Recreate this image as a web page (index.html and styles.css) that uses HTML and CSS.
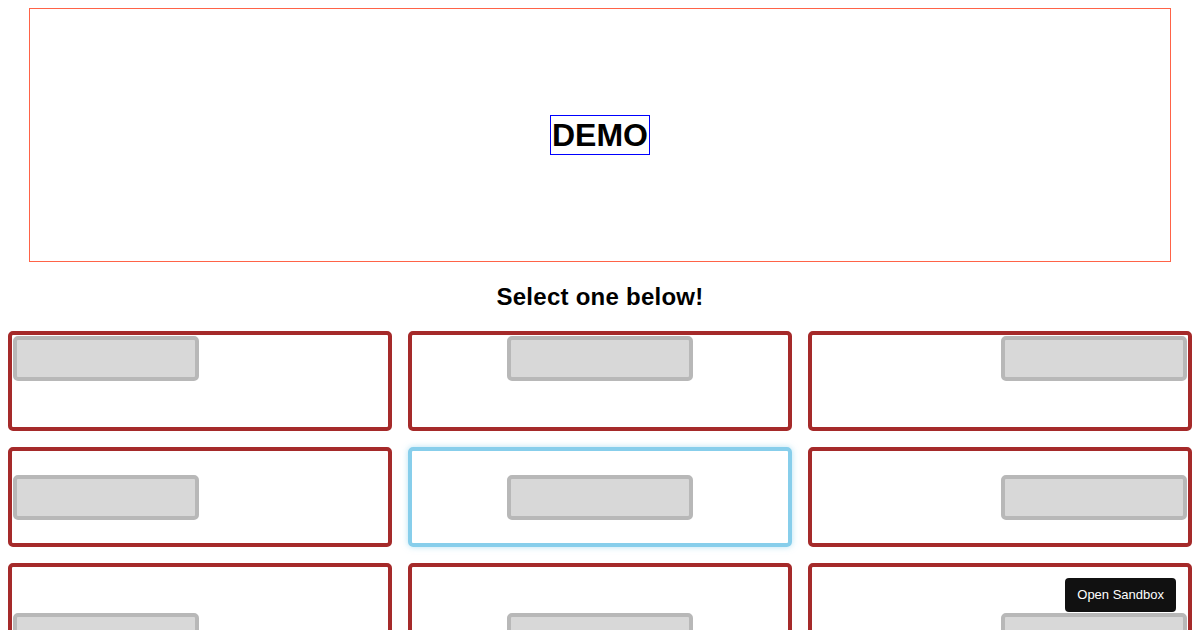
FILE: index.html
```html
<!DOCTYPE html>
<html lang="en">
<head>
    <meta charset="UTF-8">
    <meta name="viewport" content="width=device-width, initial-scale=1.0">
    <title>Align Demo</title>
    <link rel="stylesheet" href="styles.css">
</head>
<body>
    <div class="demo-area">
        <div class="demo-box">DEMO</div>
    </div>
    <h2 class="prompt">Select one below!</h2>
    <div class="option-grid">
        <div class="option align-start justify-start"><div class="chip"></div></div>
        <div class="option align-start justify-center"><div class="chip"></div></div>
        <div class="option align-start justify-end"><div class="chip"></div></div>
        <div class="option align-center justify-start"><div class="chip"></div></div>
        <div class="option align-center justify-center selected"><div class="chip"></div></div>
        <div class="option align-center justify-end"><div class="chip"></div></div>
        <div class="option align-end justify-start"><div class="chip"></div></div>
        <div class="option align-end justify-center"><div class="chip"></div></div>
        <div class="option align-end justify-end"><div class="chip"></div></div>
    </div>
    <a href="#" class="sandbox-button">Open Sandbox</a>
</body>
</html>
```
FILE: styles.css
```css
* {
    box-sizing: border-box;
}
body {
    margin: 0;
    font-family: "Liberation Sans", Arial, sans-serif;
    color: #000;
    background-color: #fff;
}
.demo-area {
    box-sizing: content-box;
    width: 95%;
    height: 252px;
    margin: 8px auto 0;
    border: 1px solid #ff6347;
    display: flex;
    align-items: center;
    justify-content: center;
}
.demo-box {
    border: 1px solid blue;
    font-size: 32px;
    font-weight: bold;
    line-height: 38px;
    padding: 0 1px;
}
.prompt {
    font-size: 24px;
    letter-spacing: 0.25px;
    text-align: center;
    margin: 21px 0 20px;
}
.option-grid {
    display: grid;
    grid-template-columns: repeat(3, 1fr);
    gap: 16px;
    padding: 0 8px 8px;
}
.option {
    height: 100px;
    border: 4px solid #a52a2a;
    border-radius: 5px;
    display: flex;
    padding: 1px;
    cursor: pointer;
}
.option.selected {
    border-color: #87ceeb;
    box-shadow: 0 0 6px rgba(135, 206, 235, 0.6);
}
.align-start { align-items: flex-start; }
.align-center { align-items: center; }
.align-end { align-items: flex-end; }
.justify-start { justify-content: flex-start; }
.justify-center { justify-content: center; }
.justify-end { justify-content: flex-end; }
.chip {
    width: 186px;
    height: 45px;
    background-color: #d8d8d8;
    border: 4px solid #b8b8b8;
    border-radius: 5px;
}
.sandbox-button {
    position: fixed;
    right: 24px;
    bottom: 18px;
    background-color: #111;
    color: white;
    font-size: 13px;
    text-decoration: none;
    padding: 9px 12px;
    border-radius: 4px;
    line-height: 16px;
}
```
